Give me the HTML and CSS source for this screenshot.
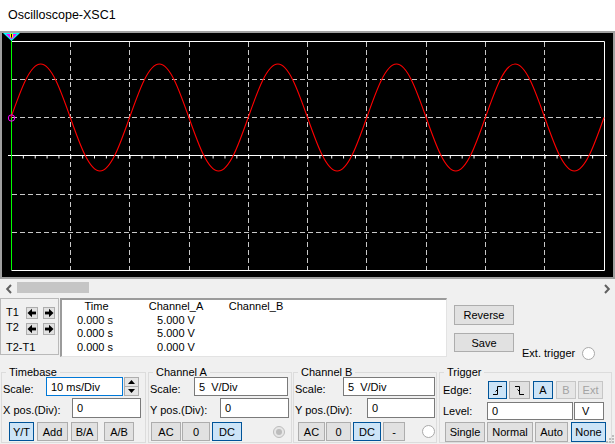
FILE: index.html
```html
<!DOCTYPE html>
<html>
<head>
<meta charset="utf-8">
<title>Oscilloscope-XSC1</title>
<link rel="stylesheet" href="styles.css">
</head>
<body>
<div class="win">
  <div class="titlebar">Oscilloscope-XSC1</div>

  <div class="scope">
    <svg class="screen" width="611" height="244" viewBox="2 33 611 244">
      <rect x="2" y="33" width="611" height="244" fill="#000"/>
      <path class="grid" d="M70.5 42V270M129.5 42V270M189.5 42V270M248.5 42V270M307.5 42V270M366.5 42V270M426.5 42V270M485.5 42V270M544.5 42V270M12 79.5H604M12 117.5H604M12 194.5H604M12 232.5H604"/>
      <path class="frame" d="M11.5 41.5H604.5V270.5H11.5"/>
      <path class="frame" d="M8 155.5H607"/>
      <path class="ticks" d="M11 157H605"/>
      <path class="cursor" d="M11.5 40V270"/>
      <path class="wave" d="M11 117.5
        c9.67,-27.41 18.92,-53.5 29.65,-53.5 c10.73,0 19.98,26.09 29.65,53.5 c9.67,27.41 18.92,53.5 29.65,53.5 c10.73,0 19.98,-26.09 29.65,-53.5
        c9.67,-27.41 18.92,-53.5 29.65,-53.5 c10.73,0 19.98,26.09 29.65,53.5 c9.67,27.41 18.92,53.5 29.65,53.5 c10.73,0 19.98,-26.09 29.65,-53.5
        c9.67,-27.41 18.92,-53.5 29.65,-53.5 c10.73,0 19.98,26.09 29.65,53.5 c9.67,27.41 18.92,53.5 29.65,53.5 c10.73,0 19.98,-26.09 29.65,-53.5
        c9.67,-27.41 18.92,-53.5 29.65,-53.5 c10.73,0 19.98,26.09 29.65,53.5 c9.67,27.41 18.92,53.5 29.65,53.5 c10.73,0 19.98,-26.09 29.65,-53.5
        c9.67,-27.41 18.92,-53.5 29.65,-53.5 c10.73,0 19.98,26.09 29.65,53.5 c9.67,27.41 18.92,53.5 29.65,53.5 c10.73,0 19.98,-26.09 29.65,-53.5"/>
      <circle class="pos" cx="11.5" cy="118" r="3.2"/>
      <polygon points="3,33 20,33 11.5,41" fill="#00ffff"/>
      <polygon points="6,34 17,34 11.5,39.5" fill="#ff00ff"/>
      <rect x="10" y="33.5" width="3" height="4" fill="#ffff00"/>
      <path d="M11.5 34V37.5" stroke="#000" stroke-width="1"/>
    </svg>
  </div>

  <div class="hscroll">
    <div class="sarrow">
      <svg width="8" height="10" viewBox="0 0 8 10"><path d="M6 1L2.2 5L6 9" fill="none" stroke="#606060" stroke-width="2"/></svg>
    </div>
    <div class="thumb"></div>
    <div class="sarrow sarrow-r">
      <svg width="8" height="10" viewBox="0 0 8 10"><path d="M2 1L5.8 5L2 9" fill="none" stroke="#606060" stroke-width="2"/></svg>
    </div>
  </div>

  <div class="mid">
    <div class="tpanel">
      <div class="trow trow1">
        <span class="tlabel">T1</span>
        <span class="abtn"><svg width="10" height="10" viewBox="0 0 10 10"><polygon points="0.5,5 5,0.8 5,9.2"/><rect x="4.5" y="3.6" width="4.5" height="2.8"/></svg></span>
        <span class="abtn abtn-gap"><svg width="10" height="10" viewBox="0 0 10 10"><polygon points="9.5,5 5,0.8 5,9.2"/><rect x="1" y="3.6" width="4.5" height="2.8"/></svg></span>
      </div>
      <div class="trow trow2">
        <span class="tlabel">T2</span>
        <span class="abtn"><svg width="10" height="10" viewBox="0 0 10 10"><polygon points="0.5,5 5,0.8 5,9.2"/><rect x="4.5" y="3.6" width="4.5" height="2.8"/></svg></span>
        <span class="abtn abtn-gap"><svg width="10" height="10" viewBox="0 0 10 10"><polygon points="9.5,5 5,0.8 5,9.2"/><rect x="1" y="3.6" width="4.5" height="2.8"/></svg></span>
      </div>
      <div class="trow trow3"><span class="tlabel">T2-T1</span></div>
    </div>

    <div class="data">
      <span class="hd-time">Time</span><span>Channel_A</span><span>Channel_B</span>
      <span>0.000 s</span><span>5.000 V</span><span></span>
      <span>0.000 s</span><span>5.000 V</span><span></span>
      <span>0.000 s</span><span>0.000 V</span><span></span>
    </div>

    <div class="btncol">
      <div class="btn btn-rev">Reverse</div>
      <div class="btn btn-save">Save</div>
    </div>

    <div class="ext">
      <span class="ext-lbl">Ext. trigger</span>
      <span class="radio"></span>
    </div>
  </div>

  <div class="controls">
    <fieldset class="grp grp-tb">
      <legend>Timebase</legend>
      <div class="row r1">
        <span class="lbl w43">Scale:</span>
        <div class="field focus w77">10 ms/Div</div>
        <div class="spin">
          <div class="spin-half"><svg width="7" height="4" viewBox="0 0 7 4"><polygon points="0,4 3.5,0 7,4"/></svg></div>
          <div class="spin-half spin-dn"><svg width="7" height="4" viewBox="0 0 7 4"><polygon points="0,0 3.5,4 7,0"/></svg></div>
        </div>
      </div>
      <div class="row r2">
        <span class="lbl w69">X pos.(Div):</span>
        <div class="field w69">0</div>
      </div>
      <div class="row r3">
        <div class="btn sel tb-yt">Y/T</div>
        <div class="btn tb-add">Add</div>
        <div class="btn tb-ba">B/A</div>
        <div class="btn tb-ab">A/B</div>
      </div>
    </fieldset>

    <fieldset class="grp grp-a">
      <legend>Channel A</legend>
      <div class="row r1">
        <span class="lbl w44">Scale:</span>
        <div class="field w94">5  V/Div</div>
      </div>
      <div class="row r2">
        <span class="lbl w70">Y pos.(Div):</span>
        <div class="field w69">0</div>
      </div>
      <div class="row r3">
        <div class="btn a-ac">AC</div>
        <div class="btn a-0">0</div>
        <div class="btn sel a-dc">DC</div>
        <span class="radio radio-dis a-radio"></span>
      </div>
    </fieldset>

    <fieldset class="grp grp-b">
      <legend>Channel B</legend>
      <div class="row r1">
        <span class="lbl w48">Scale:</span>
        <div class="field w92">5  V/Div</div>
      </div>
      <div class="row r2">
        <span class="lbl w72">Y pos.(Div):</span>
        <div class="field w68">0</div>
      </div>
      <div class="row r3">
        <div class="btn b-ac">AC</div>
        <div class="btn b-0">0</div>
        <div class="btn sel b-dc">DC</div>
        <div class="btn b-neg">-</div>
        <span class="radio b-radio"></span>
      </div>
    </fieldset>

    <fieldset class="grp grp-t">
      <legend>Trigger</legend>
      <div class="row t1">
        <span class="tlbl w47">Edge:</span>
        <div class="btn sel e-rise"><svg width="13" height="12" viewBox="0 0 13 12"><path d="M2 10.5H6.5V2.5H11M4.5 7.5L6.5 5.5" fill="none" stroke="#000" stroke-width="1"/></svg></div>
        <div class="btn e-fall"><svg width="13" height="12" viewBox="0 0 13 12"><path d="M2 2.5H6.5V10.5H11M4.5 5.5L6.5 7.5" fill="none" stroke="#000" stroke-width="1"/></svg></div>
        <div class="btn sel e-a">A</div>
        <div class="btn dis e-b">B</div>
        <div class="btn dis e-ext">Ext</div>
      </div>
      <div class="row t2">
        <span class="tlbl w46">Level:</span>
        <div class="field w86">0</div>
        <div class="field unit">V</div>
      </div>
      <div class="row t3">
        <div class="btn m-single">Single</div>
        <div class="btn m-normal">Normal</div>
        <div class="btn m-auto">Auto</div>
        <div class="btn sel m-none">None</div>
      </div>
    </fieldset>
  </div>

  <svg class="grip" width="10" height="10" viewBox="0 0 10 10">
    <rect x="8" y="2" width="2" height="2"/><rect x="8" y="5" width="2" height="2"/><rect x="5" y="5" width="2" height="2"/>
    <rect x="8" y="8" width="2" height="2"/><rect x="5" y="8" width="2" height="2"/><rect x="2" y="8" width="2" height="2"/>
  </svg>
</div>
</body>
</html>
```

FILE: styles.css
```css
* { box-sizing: border-box; }
html, body { margin: 0; padding: 0; }
body {
  width: 615px;
  height: 444px;
  overflow: hidden;
  background: #f0f0f0;
  font-family: "Liberation Sans", Arial, sans-serif;
  font-size: 11px;
  color: #000;
}
.win {
  position: relative;
  width: 615px;
  height: 444px;
  display: flex;
  flex-direction: column;
}

/* title */
.titlebar {
  flex: none;
  height: 31px;
  background: #fff;
  padding-left: 8px;
  font-size: 12.5px;
  line-height: 31px;
}

/* scope screen */
.scope {
  flex: none;
  height: 248px;
  border: 2px solid #a0a0a0;
  background: #000;
}
.screen { display: block; }
.grid { stroke: #c8c8c8; stroke-width: 1; stroke-dasharray: 5 3; fill: none; }
.frame { stroke: #fff; stroke-width: 1; fill: none; }
.ticks { stroke: #fff; stroke-width: 3; stroke-dasharray: 1 10.86; }
.cursor { stroke: #00ff00; stroke-width: 1; }
.wave { stroke: #ff0000; stroke-width: 1.1; fill: none; }
.pos { stroke: #ff00ff; stroke-width: 1; fill: none; }

/* scrollbar */
.hscroll {
  flex: none;
  height: 19px;
  display: flex;
  align-items: flex-start;
}
.sarrow {
  width: 17px;
  height: 19px;
  display: flex;
  align-items: center;
  justify-content: center;
}
.sarrow svg { display: block; }
.sarrow-r { margin-left: auto; }
.thumb {
  width: 72px;
  height: 11px;
  margin-top: 3px;
  background: #c5c5c5;
}

/* middle row */
.mid {
  flex: none;
  height: 62px;
  display: flex;
  align-items: flex-start;
}
.tpanel {
  width: 59px;
  height: 57px;
  margin-right: 1px;
  border: 1px solid #b9b9b9;
  padding-top: 7px;
}
.trow { display: flex; align-items: flex-start; }
.tlabel { width: 25px; padding-left: 5px; line-height: 13px; flex: none; }
.trow1 .abtn { margin-top: 1px; }
.trow2 { margin-top: 2px; }
.trow2 .abtn { margin-top: 2px; }
.trow3 { margin-top: 6px; }
.trow3 .tlabel { width: auto; }
.abtn {
  width: 12px;
  height: 12px;
  border: 1px solid #adadad;
  background: #e1e1e1;
  display: flex;
  align-items: center;
  justify-content: center;
  flex: none;
}
.abtn svg { display: block; fill: #000; }
.abtn-gap { margin-left: 5px; }

.data {
  width: 387px;
  height: 59px;
  background: #fff;
  border-top: 2px solid #9b9b9b;
  border-left: 2px solid #9b9b9b;
  border-right: 1px solid #e3e3e3;
  border-bottom: 1px solid #e3e3e3;
  display: grid;
  grid-template-columns: 66px 96px 64px;
  grid-auto-rows: 13.5px;
  align-content: start;
  text-align: center;
  line-height: 13.5px;
  white-space: nowrap;
}
.hd-time { padding-left: 3px; }

.btncol {
  width: 60px;
  margin-left: 7px;
  display: flex;
  flex-direction: column;
}
.btn-rev { height: 20px; margin-top: 7px; }
.btn-save { height: 19px; margin-top: 8px; }

.ext {
  margin-left: 8px;
  margin-top: 48px;
  height: 14px;
  display: flex;
  align-items: center;
}
.ext-lbl { width: 60px; }

/* generic controls */
.btn {
  flex: none;
  display: flex;
  align-items: center;
  justify-content: center;
  background: #e1e1e1;
  border: 1px solid #adadad;
  white-space: nowrap;
}
.btn svg { display: block; }
.btn.sel { background: #cce4f7; border-color: #005499; }
.btn.dis { background: #e6e6e6; border-color: #c6c6c6; color: #a3a3a3; }

.field {
  flex: none;
  height: 100%;
  background: #fff;
  border: 1px solid #7a7a7a;
  padding: 0 4px;
  display: flex;
  align-items: center;
  white-space: pre;
}
.field.focus { border-color: #0078d7; }

.radio {
  flex: none;
  width: 13px;
  height: 13px;
  border-radius: 50%;
  border: 1px solid #a9a9a9;
  background: #fff;
  display: flex;
  align-items: center;
  justify-content: center;
}
.radio-dis { width: 12px; height: 12px; border-color: #bcbcbc; background: #e6e6e6; }
.radio-dis::after {
  content: "";
  width: 6px;
  height: 6px;
  border-radius: 50%;
  background: #bcbcbc;
}

/* bottom groups */
.controls {
  flex: none;
  height: 84px;
  display: flex;
  padding-top: 7px;
  padding-left: 1px;
}
.grp {
  margin: 0;
  padding: 0 1px;
  min-width: 0;
  height: 76px;
  border: 1px solid #dcdcdc;
}
.grp legend {
  margin-left: 3px;
  padding: 0 3px;
  height: 10px;
  line-height: 10px;
}
.grp-tb { width: 145px; }
.grp-a { width: 144px; margin-left: 2px; }
.grp-b { width: 144px; margin-left: 1px; }
.grp-t { width: 173px; margin-left: 2px; }

.row { display: flex; align-items: center; }
.r1 { height: 19px; }
.r2 { height: 20px; margin-top: 2px; }
.r3 { height: 19px; margin-top: 4px; }
.r3 .btn { height: 19px; }
.t1 { height: 18px; margin-top: 4px; }
.t1 .btn { height: 18px; }
.t2 { height: 18px; margin-top: 3px; }
.t3 { height: 20px; margin-top: 2px; }
.t3 .btn { height: 20px; }

.lbl { flex: none; padding-top: 4px; white-space: nowrap; }
.tlbl { flex: none; padding-left: 2px; white-space: nowrap; }

.w43 { width: 43px; }
.w44 { width: 44px; }
.w46 { width: 46px; }
.w47 { width: 47px; }
.w48 { width: 48px; }
.w68 { width: 68px; }
.w69 { width: 69px; }
.w70 { width: 70px; }
.w72 { width: 72px; }
.w77 { width: 77px; }
.w86 { width: 86px; }
.w92 { width: 92px; }
.w94 { width: 94px; }

.spin {
  flex: none;
  width: 15px;
  height: 19px;
  margin-left: 1px;
  border: 1px solid #adadad;
  background: #e5e5e5;
  display: flex;
  flex-direction: column;
}
.spin-half { flex: 1; display: flex; align-items: center; justify-content: center; }
.spin-half svg { display: block; fill: #000; }
.spin-dn { border-top: 1px solid #adadad; }

.tb-yt { width: 25px; margin-left: 6px; }
.tb-add { width: 31px; margin-left: 3px; }
.tb-ba { width: 27px; margin-left: 3px; }
.tb-ab { width: 30px; margin-left: 6px; }

.a-ac { width: 30px; margin-left: 1px; }
.a-0 { width: 28px; margin-left: 1px; }
.a-dc { width: 30px; margin-left: 2px; }
.a-radio { margin-left: auto; margin-right: 5px; }

.b-ac { width: 27px; margin-left: 3px; }
.b-0 { width: 25px; margin-left: 1px; }
.b-dc { width: 28px; margin-left: 2px; }
.b-neg { width: 22px; margin-left: 2px; }
.b-radio { margin-left: auto; }

.e-rise { width: 19px; }
.e-fall { width: 21px; margin-left: 2px; }
.e-a { width: 20px; margin-left: 3px; }
.e-b { width: 20px; margin-left: 3px; }
.e-ext { width: 25px; margin-left: 2px; }

.unit { width: 30px; margin-left: 1px; padding-left: 7px; }

.m-single { width: 40px; margin-left: 4px; }
.m-normal { width: 46px; margin-left: 2px; }
.m-auto { width: 33px; margin-left: 2px; }
.m-none { width: 35px; margin-left: 3px; }

.grip {
  position: absolute;
  right: 1px;
  bottom: 1px;
  fill: #bdbdbd;
}
```
